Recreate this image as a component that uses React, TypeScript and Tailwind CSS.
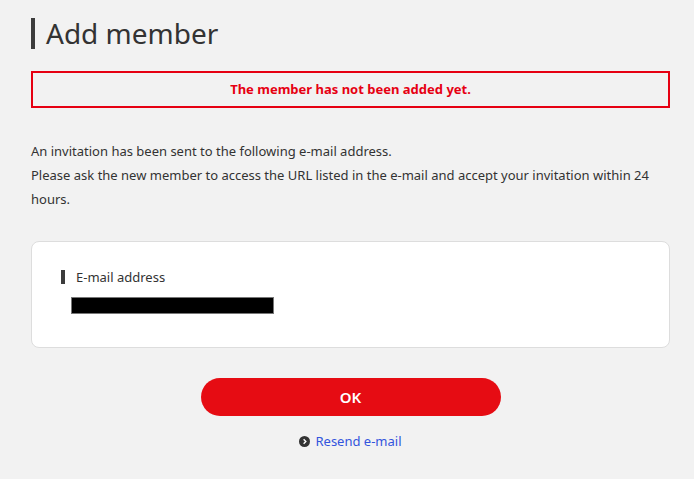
import React from "react";

export default function App() {
  return (
    <div className="min-h-[479px] w-full bg-[#f2f2f2] text-[#333333]" style={{ fontFamily: "'Noto Sans', sans-serif" }}>
      <div className="pl-[31px] pr-[24px] pt-[17px]">
        <div className="flex items-center">
          <div className="h-[31px] w-[4px] bg-[#3c3c3c]" />
          <h1 className="ml-[11px] text-[28px] leading-[32px] font-normal text-[#333333]">Add member</h1>
        </div>
        <div className="mt-[22px] flex h-[37px] items-center justify-center border-2 border-[#e60012] text-[13px] font-bold text-[#e60012]">
          The member has not been added yet.
        </div>
        <div className="mt-[31px] text-[13px] leading-[24px] text-[#333333]">
          <p>An invitation has been sent to the following e-mail address.</p>
          <p>Please ask the new member to access the URL listed in the e-mail and accept your invitation within 24 hours.</p>
        </div>
        <div className="mt-[30px] h-[107px] rounded-[8px] border border-[#dddddd] bg-white px-[29px] pt-[27px]">
          <div className="flex items-center">
            <div className="h-[14px] w-[4px] bg-[#3c3c3c]" />
            <span className="ml-[11px] text-[13px] leading-[16px]">E-mail address</span>
          </div>
          <div className="ml-[10px] mt-[12px] h-[17px] w-[203px] border border-[#777777] bg-black" />
        </div>
        <div className="mt-[30px] flex justify-center">
          <button className="flex h-[38px] w-[300px] items-center justify-center rounded-full bg-[#e60c13] text-[15px] font-semibold text-white">
            OK
          </button>
        </div>
        <div className="mt-[17px] flex items-center justify-center">
          <span className="flex h-[11px] w-[11px] items-center justify-center rounded-full bg-[#333333]">
            <svg width="7" height="7" viewBox="0 0 8 8">
              <path d="M3 1.5 L5.5 4 L3 6.5" stroke="white" strokeWidth="1.6" fill="none" />
            </svg>
          </span>
          <a className="ml-[5px] text-[13px] leading-[16px] text-[#3355dd]" href="#">Resend e-mail</a>
        </div>
      </div>
    </div>
  );
}
